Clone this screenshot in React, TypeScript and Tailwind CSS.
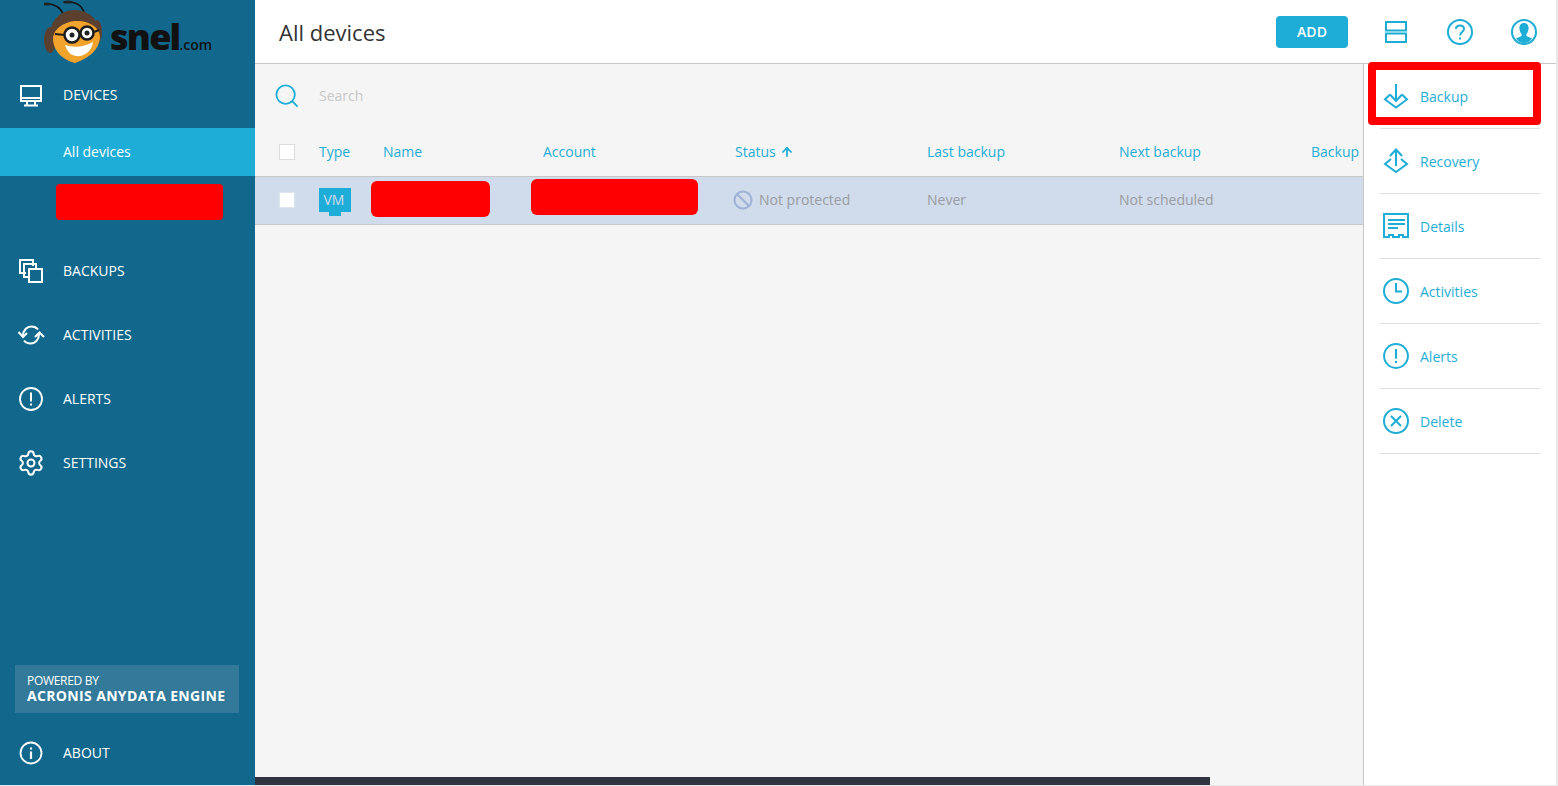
import { ArrowUp, Settings } from "lucide-react";
import type { ReactNode } from "react";

const BeeLogo = () => (
  <svg viewBox="0 0 60 64" className="h-16 w-15 shrink-0">
    <path d="M19 15 C18 9 12 4 3 4" fill="none" stroke="#111" strokeWidth="1.6" />
    <path d="M41 17 C40 8 35 2 24 2" fill="none" stroke="#111" strokeWidth="1.6" />
    <ellipse cx="3" cy="4" rx="4" ry="1.6" fill="#222" />
    <ellipse cx="24" cy="2" rx="5" ry="1.6" fill="#222" />
    <ellipse cx="6" cy="40" rx="6" ry="13" fill="#5b4030" />
    <ellipse cx="53" cy="32" rx="5" ry="12" fill="#5b4030" />
    <path d="M6 40 C4 22 16 10 30 10 C44 10 55 18 54 34 L30 34 Z" fill="#5b4030" />
    <path d="M9 40 C9 28 21 22 31 21 C45 20 57 28 56 38 C55 50 45 58 31 63 C19 60 10 52 9 40 Z" fill="#f2a32c" />
    <circle cx="28" cy="35" r="7.500" fill="#fff" stroke="#1c1c1c" strokeWidth="2.500" />
    <circle cx="43" cy="33" r="6.500" fill="#fff" stroke="#1c1c1c" strokeWidth="2.500" />
    <circle cx="28" cy="35" r="2.500" fill="#222" />
    <circle cx="43" cy="33" r="2.500" fill="#222" />
    <path d="M11 34 L21 35 M35 34 L37 34 M50 32 L55 30" stroke="#1c1c1c" strokeWidth="2.200" />
    <path d="M21 45 C29 48 41 47 49 42 C48 52 39 57 32 56 C26 55 23 51 21 45 Z" fill="#fff" />
  </svg>
);

const Monitor = () => (
  <svg viewBox="0 0 24 24" className="h-6 w-6" fill="none" stroke="currentColor" strokeWidth="2">
    <rect x="2" y="2" width="20" height="15" />
    <path d="M2 14 H22 M8 17 V21 M16 17 V21 M5 21.500 H19" />
  </svg>
);

const Copies = () => (
  <svg viewBox="0 0 24 24" className="h-6 w-6" fill="none" stroke="currentColor" strokeWidth="2">
    <path d="M14 7 V1 H1 V14 H7" />
    <path d="M17 11 V5 H5 V18 H10" />
    <rect x="10" y="10" width="13" height="13" />
  </svg>
);

const SyncArrows = () => (
  <svg viewBox="0 0 30 24" className="h-6 w-8" fill="none" stroke="currentColor" strokeWidth="2">
    <path d="M7 13 C7 7 11 3.500 15.500 3.500 C18 3.500 20.500 4.500 22 6.500" />
    <path d="M23 11 C23 17 19 20.500 14.500 20.500 C12 20.500 9.500 19.500 8 17.500" />
    <path d="M2.500 9 L7 14 L11 10 M19 14 L23.500 9.500 L28 14" />
  </svg>
);

const CircleBang = ({ className = "h-6 w-6" }: { className?: string }) => (
  <svg viewBox="0 0 24 24" className={className} fill="none" stroke="currentColor" strokeWidth="1.800">
    <circle cx="12" cy="12" r="11" />
    <path d="M12 5.500 V14.500" strokeWidth="2" />
    <path d="M12 16.500 V18.500" strokeWidth="2" />
  </svg>
);

const Info = () => (
  <svg viewBox="0 0 24 24" className="h-6 w-6" fill="none" stroke="currentColor" strokeWidth="1.800">
    <circle cx="12" cy="12" r="10.500" />
    <path d="M12 10.500 V18 M12 6.500 V8.500" strokeWidth="2.200" />
  </svg>
);

const NavItem = ({ icon, label, labelClass = "font-medium" }: { icon: ReactNode; label: string; labelClass?: string }) => (
  <div className="flex h-16 items-center">
    <div className="flex w-[63px] justify-center pr-0.5">{icon}</div>
    <span className={labelClass}>{label}</span>
  </div>
);

const Sidebar = () => (
  <aside className="flex h-full w-[255px] shrink-0 flex-col bg-[#12688c] text-sm text-white">
    <div className="flex h-16 items-center gap-1.5 pl-11">
      <BeeLogo />
      <div className="flex items-baseline pt-2.5">
        <span className="text-4xl leading-none font-extrabold tracking-tighter text-[#111]">snel</span>
        <span className="text-sm font-semibold text-[#111]">.com</span>
      </div>
    </div>
    <NavItem icon={<Monitor />} label="DEVICES" labelClass="pb-0.5 font-medium" />
    <div className="flex h-12 items-center bg-[#1eadd6] pl-[63px]">All devices</div>
    <div className="mt-2 mr-8 mb-5 ml-14 h-9 rounded-sm bg-[#ff0000]" />
    <div className="-mt-px">
      <NavItem icon={<Copies />} label="BACKUPS" />
      <NavItem icon={<SyncArrows />} label="ACTIVITIES" />
      <NavItem icon={<CircleBang />} label="ALERTS" />
      <NavItem icon={<Settings className="h-7 w-7" strokeWidth={1.75} />} label="SETTINGS" />
    </div>
    <div className="mt-auto mb-2 pr-4 pl-[15px]">
      <div className="h-12 bg-[#33799a] px-3 pt-2.5">
        <div className="text-xs leading-3 tracking-tight">POWERED BY</div>
        <div className="-mt-px text-sm leading-5 font-bold tracking-wide">ACRONIS ANYDATA ENGINE</div>
      </div>
    </div>
    <NavItem icon={<Info />} label="ABOUT" labelClass="" />
  </aside>
);

const Header = () => (
  <header className="flex h-16 shrink-0 items-center justify-between border-b border-[#c8c8c8] bg-white pr-4.5 pl-6">
    <h1 className="pt-0.5 text-[22px] text-[#333]">All devices</h1>
    <div className="flex items-center text-[#1eadd6]">
      <button className="h-8 w-[72px] rounded bg-[#1eadd6] text-sm font-semibold text-white">ADD</button>
      <svg viewBox="0 0 24 24" className="ml-9 h-6 w-6" fill="none" stroke="currentColor" strokeWidth="2">
        <rect x="2" y="2" width="20" height="8.500" />
        <rect x="2" y="13.500" width="20" height="8.500" />
      </svg>
      <svg viewBox="0 0 28 28" className="ml-9.5 h-7 w-7" fill="none" stroke="currentColor" strokeWidth="2">
        <circle cx="14" cy="14" r="12" />
        <path d="M10 11 C10 8.500 12 7.500 14 7.500 C16.500 7.500 18 9 18 11 C18 14 14 14 14 17.500" />
        <path d="M14 19.500 V21.500" />
      </svg>
      <svg viewBox="0 0 28 28" className="ml-9 h-7 w-7" fill="none" stroke="currentColor" strokeWidth="2">
        <circle cx="14" cy="14" r="12" />
        <path
          d="M14 5 C17.500 5 19 8 18.500 11 C18.300 13 17.500 15 16.500 16 L16.500 18 L22 20.500 C20 23.500 17 25 14 25 C11 25 8 23.500 6 20.500 L11.500 18 L11.500 16 C10.500 15 9.700 13 9.500 11 C9 8 10.500 5 14 5 Z"
          fill="currentColor"
          stroke="none"
        />
      </svg>
    </div>
  </header>
);

const columns = [
  { label: "Name", className: "w-40" },
  { label: "Account", className: "w-48" },
  { label: "Status", className: "w-48" },
  { label: "Last backup", className: "w-48" },
  { label: "Next backup", className: "w-48" },
  { label: "Backup", className: "w-24" },
];

const DeviceTable = () => (
  <div className="flex min-w-0 flex-1 flex-col overflow-hidden bg-[#f5f5f5] text-sm">
    <div className="flex h-16 shrink-0 items-center pl-5">
      <svg viewBox="0 0 26 26" className="h-6 w-6 text-[#1eadd6]" fill="none" stroke="currentColor" strokeWidth="2">
        <circle cx="11.500" cy="11.500" r="10" />
        <path d="M18.500 18.500 L24.500 24.500" />
      </svg>
      <span className="ml-5 text-[#c8c8c8]">Search</span>
    </div>
    <div className="box-content flex h-12 shrink-0 items-center border-b border-[#c8c8c8] pl-6 whitespace-nowrap text-[#1eadd6]">
      <div className="w-10 shrink-0">
        <div className="h-4 w-4 border border-[#dcdcdc] bg-white" />
      </div>
      <div className="w-16 shrink-0">Type</div>
      {columns.map((c) => (
        <div key={c.label} className={`flex shrink-0 items-center gap-1 ${c.className}`}>
          {c.label}
          {c.label === "Status" && <ArrowUp className="h-3.5 w-3.5" strokeWidth={3} />}
        </div>
      ))}
    </div>
    <div className="relative flex h-12 shrink-0 items-center border-b border-[#c8c8c8] bg-[#d0dbeb] pb-0.5 pl-6 whitespace-nowrap text-[#9a9da3]">
      <div className="w-10 shrink-0">
        <div className="h-4 w-4 border border-[#dfe5ef] bg-white" />
      </div>
      <div className="w-16 shrink-0">
        <div className="relative flex h-6 w-8 items-center justify-center bg-[#1eadd6] pr-0.5 text-sm font-medium text-[#d0dbeb]">
          VM
          <div className="absolute -bottom-1 left-2.5 h-1 w-3 bg-[#1eadd6]" />
        </div>
      </div>
      <div className="w-40 shrink-0" />
      <div className="w-48 shrink-0" />
      <div className="-ml-0.5 flex w-48 shrink-0 items-center gap-1.5 pr-px">
        <svg viewBox="0 0 20 20" className="h-5 w-5 text-[#9db2d6]" fill="none" stroke="currentColor" strokeWidth="2">
          <circle cx="10" cy="10" r="8.500" />
          <path d="M4 4 L16 16" />
        </svg>
        Not protected
      </div>
      <div className="ml-0.5 w-48 shrink-0">Never</div>
      <div className="w-48 shrink-0">Not scheduled</div>
      <div className="absolute top-1 left-[116px] h-9 w-[119px] rounded-md bg-[#ff0000]" />
      <div className="absolute top-0.5 left-[276px] h-9 w-[167px] rounded-md bg-[#ff0000]" />
    </div>
    <div className="flex flex-1 items-end">
      <div className="h-2 w-[955px] bg-[#2f3440]" />
    </div>
  </div>
);

const actionIcon = "h-6.5 w-6.5";

const actions: { label: string; icon: ReactNode }[] = [
  {
    label: "Backup",
    icon: (
      <svg viewBox="0 0 26 26" className={actionIcon} fill="none" stroke="currentColor" strokeWidth="2">
        <path d="M13 1 V18 M7 11.500 L13 18 L19 11.500" />
        <path d="M7 11.500 L2 16.500 L13 24.500 L24 16.500 L19 11.500" />
      </svg>
    ),
  },
  {
    label: "Recovery",
    icon: (
      <svg viewBox="0 0 26 26" className={actionIcon} fill="none" stroke="currentColor" strokeWidth="2">
        <path d="M13 1.500 V18 M7 8 L13 1.500 L19 8" />
        <path d="M8 11 L2 16 L13 24 L24 16 L18 11" />
      </svg>
    ),
  },
  {
    label: "Details",
    icon: (
      <svg viewBox="0 0 26 26" className={actionIcon} fill="none" stroke="currentColor" strokeWidth="2">
        <path d="M1 1 H25 V24 H20 V22 H16 V24 H10 V22 H6 V24 H1 Z" />
        <path d="M5 7 H22 M5 11 H22 M5 15 H15" />
      </svg>
    ),
  },
  {
    label: "Activities",
    icon: (
      <svg viewBox="0 0 26 26" className={actionIcon} fill="none" stroke="currentColor" strokeWidth="2">
        <circle cx="13" cy="13" r="12" />
        <path d="M13 5 V13.500 H19" />
      </svg>
    ),
  },
  {
    label: "Alerts",
    icon: <CircleBang className={actionIcon} />,
  },
  {
    label: "Delete",
    icon: (
      <svg viewBox="0 0 26 26" className={actionIcon} fill="none" stroke="currentColor" strokeWidth="2">
        <circle cx="13" cy="13" r="12" />
        <path d="M8 8 L18 18 M18 8 L8 18" />
      </svg>
    ),
  },
];

const ActionPanel = () => (
  <div className="relative h-full w-[193px] shrink-0 border-l border-[#c8c8c8] bg-white px-4 text-sm text-[#1eadd6]">
    {actions.map((a) => (
      <div key={a.label} className="flex h-[65px] items-center gap-2.5 border-b border-[#e0e0e0] pl-0.5">
        <div className="flex w-7 justify-center">{a.icon}</div>
        <span className="pt-0.5">{a.label}</span>
      </div>
    ))}
    <div className="absolute -top-0.5 left-1 h-[63px] w-[173px] rounded border-8 border-[#ff0000]" />
  </div>
);

export default function App() {
  return (
    <div className="h-screen w-screen overflow-hidden bg-[#e8e8e8] pr-0.5 pb-px font-['Open_Sans',sans-serif]">
      <div className="flex h-full bg-white">
        <Sidebar />
        <div className="flex min-w-0 flex-1 flex-col">
          <Header />
          <div className="flex min-h-0 flex-1">
            <DeviceTable />
            <ActionPanel />
          </div>
        </div>
      </div>
    </div>
  );
}
